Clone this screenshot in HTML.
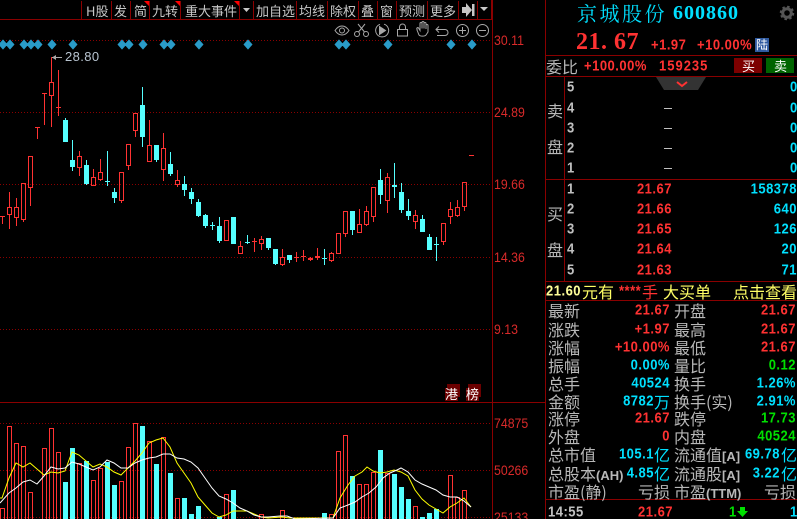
<!DOCTYPE html>
<html><head><meta charset="utf-8"><style>
html,body{margin:0;padding:0;background:#000}
#p{position:relative;width:797px;height:519px;overflow:hidden;background:#000;font-family:"Liberation Sans","WenQuanYi Zen Hei",sans-serif}
#p svg{position:absolute;left:0;top:0}
.t{position:absolute;white-space:nowrap;line-height:16px;height:16px}
.z{font-family:"WenQuanYi Zen Hei","Noto Sans CJK SC",sans-serif;font-size:16px;color:#b8b8b8}
.b{font-weight:bold;font-size:13px;letter-spacing:.5px;transform:scaleY(1.15)}
.tb{font-family:"WenQuanYi Zen Hei","Noto Sans CJK SC",sans-serif;font-size:13px;color:#c8c8c8;top:3px}
.a{font-size:14px;color:#d92a2a;transform:scaleX(.88);transform-origin:left center}
.r{color:#ff3232}.c{color:#00e0ff}.g{color:#00e000}.y{color:#ffff66}.w{color:#c0c0c0}
</style></head><body><div id="p">
<svg width="797" height="519" viewBox="0 0 797 519">
<g stroke="#8a0000" stroke-width="1" stroke-dasharray="1 2" fill="none">
<path d="M0 40.5H492M0 112.5H492M0 184.5H492M0 257.5H492M0 329.5H492M0 423.5H492M0 470.5H492M0 517.5H492"/>
</g>
<g stroke="#8a0000" stroke-width="1" fill="none">
<path d="M0 19.5H492M492.5 0V519M545.5 0V519M0 402.5H545M546 55.5H797M546 76.5H797M546 179.5H797M546 281.5H797M546 300.5H797M546 499.5H797M564.5 76V281"/>
<path d="M81.5 1V19M111.5 1V19M130.5 1V19M149.5 1V19M180.5 1V19M239.5 1V19M253.5 1V19M296.5 1V19M327.5 1V19M358.5 1V19M377.5 1V19M396.5 1V19M427.5 1V19M458.5 1V19M477.5 1V19M491.5 0V19"/>
</g>
<path d="M144 1h5v5zM175 1h5v5zM234 1h5v5z" fill="#f00"/>
<path d="M243 8h7l-3.500 4zM480 7h8l-4 4z" fill="#c8c8c8"/>
<path d="M462 7h4V3l6 7-6 7v-4h-4zM472 4h2.500v12h-2.500z" fill="#c8c8c8"/>
<g fill="#2a9bc8" stroke="#2a9bc8" stroke-width=".8"><path d="M3 40l4 4.500-4 4.500-4-4.500zM10 40l4 4.500-4 4.500-4-4.500zM24 40l4 4.500-4 4.500-4-4.500zM31 40l4 4.500-4 4.500-4-4.500zM38 40l4 4.500-4 4.500-4-4.500zM52 40l4 4.500-4 4.500-4-4.500zM73 40l4 4.500-4 4.500-4-4.500zM122 40l4 4.500-4 4.500-4-4.500zM129 40l4 4.500-4 4.500-4-4.500zM143 40l4 4.500-4 4.500-4-4.500zM164 40l4 4.500-4 4.500-4-4.500zM171 40l4 4.500-4 4.500-4-4.500zM199 40l4 4.500-4 4.500-4-4.500zM248 40l4 4.500-4 4.500-4-4.500zM339 40l4 4.500-4 4.500-4-4.500zM346 40l4 4.500-4 4.500-4-4.500zM388 40l4 4.500-4 4.500-4-4.500zM451 40l4 4.500-4 4.500-4-4.500zM472 40l4 4.500-4 4.500-4-4.500z"/></g>
<g stroke="#a8a8a8" stroke-width="1" fill="none">
<path d="M335 30.500c4-6 10-6 14 0c-4 6-10 6-14 0z"/><circle cx="342" cy="30.500" r="2.500"/>
<circle cx="357" cy="34" r="2.500"/><circle cx="366" cy="34" r="2.500"/><path d="M358.500 32L365 24M364.500 32L358 24"/>
<path d="M384 24.200A6.500 6.500 0 1 1 380 24.300"/><path d="M379.500 26.500l6 4-6 4z" fill="#a8a8a8"/>
<path d="M397.500 29.500h10v6.500h-10zM399.500 29.500v-2.500a3 3 0 0 1 6 0v2.500"/>
<path d="M417 30l2 5c1 1.500 6 1.500 7 0l2-3v-6.500a.800.800 0 0 0-2 0v3.500v-5.500a.800.800 0 0 0-2 0v5v-6a.800.800 0 0 0-2 0v6v-5a.800.800 0 0 0-2 0v7l-1.500-2.500a.800.800 0 0 0-1.500 1z"/>
<path d="M436 29.500h9a3 3 0 0 1 0 6h-8M439 26.500l-3 3 3 3"/>
<circle cx="462.500" cy="30.500" r="6"/><path d="M459 30.500h7M462.500 27v7"/>
<circle cx="482.500" cy="30.500" r="6"/><path d="M479 30.500h7"/>
</g>
<path d="M52 57.500H62" stroke="#aaa"/><path d="M52 57.500l4-2.500v5z" fill="#aaa"/>
<!-- volume -->
<path d="M63 482h5v37h-5zM70 448h5v71h-5zM84 461h5v58h-5zM105 462h5v57h-5zM112 485h5v34h-5zM140 426h5v93h-5zM154 464h5v55h-5zM168 473h5v46h-5zM182 498h5v21h-5zM189 514h5v5h-5zM196 506h5v13h-5zM217 517h5v2h-5zM231 490h5v29h-5zM322 513h5v6h-5zM350 476h5v43h-5zM378 450h5v69h-5zM392 474h5v45h-5zM399 487h5v32h-5zM406 499h5v20h-5zM420 517h5v2h-5zM427 513h5v6h-5zM434 509h5v10h-5z" fill="#55ffff"/>
<path d="M0.500 508.500h4V520h-4zM7.500 426.500h4V520h-4zM14.500 443.500h4V520h-4zM21.500 446.500h4V520h-4zM28.500 492.500h4V520h-4zM42.500 448.500h4V520h-4zM49.500 428.500h4V520h-4zM56.500 452.500h4V520h-4zM77.500 463.500h4V520h-4zM91.500 480.500h4V520h-4zM98.500 468.500h4V520h-4zM119.500 481.500h4V520h-4zM126.500 447.500h4V520h-4zM133.500 423.500h4V520h-4zM147.500 441.500h4V520h-4zM161.500 437.500h4V520h-4zM175.500 498.500h4V520h-4zM224.500 494.500h4V520h-4zM259.500 514.500h4V520h-4zM280.500 510.500h4V520h-4zM329.500 514.500h4V520h-4zM336.500 451.500h4V520h-4zM343.500 435.500h4V520h-4zM357.500 484.500h4V520h-4zM364.500 484.500h4V520h-4zM371.500 472.500h4V520h-4zM385.500 473.500h4V520h-4zM413.500 506.500h4V520h-4zM448.500 475.500h4V520h-4zM455.500 497.500h4V520h-4zM462.500 490.500h4V520h-4z" fill="none" stroke="#ff3232"/>
<polyline fill="none" stroke="#ffff00" stroke-width="1" points="0,498 2,498 9,478 16,463 23,467 30,463 37,469 44,475 51,472 58,473 65,471 72,452 79,455 86,461 93,467 100,464 107,467 114,472 121,475 128,468 135,461 142,453 149,443 156,440 163,438 170,447 177,463 184,473 191,483 198,497 205,505 212,513 219,517 226,515 233,511 240,511 247,511 254,514 261,517 268,518 282,517 290,518 325,518 333,518 340,498 348,485 355,476 362,472 367,467 373,471 380,473 387,472 394,470 401,472 408,476 415,490 422,499 429,505 436,509 443,513 450,507 457,503 464,498 471,507"/>
<polyline fill="none" stroke="#ffffff" stroke-width="1" points="0,503 9,493 16,488 23,482 30,480 37,484 44,476 51,467 58,469 65,468 72,462 79,464 86,467 93,470 100,467 107,460 114,463 121,468 128,468 135,463 142,460 149,458 156,457 163,454 170,454 177,458 184,459 191,462 198,468 205,478 212,488 219,496 226,499 233,503 240,508 247,511 254,515 261,517 268,517 280,516 287,516 295,519 333,518 340,508 348,505 355,502 362,497 369,493 376,487 383,478 390,473 397,470 401,468 408,472 415,480 422,484 429,487 436,490 443,495 450,497 457,497 464,501 471,507"/>
<!-- candles -->
<path d="M63 120h5v22h-5zM70 160h5v7h-5zM84 165h5v19h-5zM112 192h5v6h-5zM140 105h5v32h-5zM154 145h5v15h-5zM168 164h5v10h-5zM182 184h5v6h-5zM189 192h5v7h-5zM196 202h5v14h-5zM203 215h5v11h-5zM217 226h5v15h-5zM231 217h5v27h-5zM266 238h5v10h-5zM273 249h5v15h-5zM287 255h5v5h-5zM350 211h5v19h-5zM378 180h5v15h-5zM399 192h5v18h-5zM406 211h5v5h-5zM420 219h5v13h-5zM427 237h5v13h-5zM392 185h5v2h-5z" fill="#55ffff"/>
<path fill="none" stroke="#55ffff" d="M65.500 118V120M72.500 140V171M86.500 160V185M107.500 151V186M105 181.500h5M114.500 188V203M142.500 87V147M156.500 160V162M170.500 152V176M184.500 176V196M191.500 188V204M198.500 199V217M205.500 214V228M212.500 222V230M210 225.500h5M219.500 217V243M247.500 235V244M245 242.500h5M268.500 248V250M275.500 264V265M289.500 260V263M324.500 249V265M322 258.500h5M352.500 230V235M380.500 169V204M394.500 163V198M401.500 183V213M408.500 199V220M422.500 215V219M429.500 234V237M436.500 237V261M434 244.500h5"/>
<path fill="none" stroke="#ff3232" d="M2.500 216V224M0 216.500h5M9.500 192V207M7.500 207.500h4V214.500h-4zM9.500 215V229M16.500 198V207M14.500 207.500h4V217.500h-4zM16.500 218V226M21.500 183.500h4V219.500h-4zM23.500 220V222M28.500 156.500h4V187.500h-4zM30.500 188V206M37.500 127V139M35 127.500h5M44.500 93V125M42 93.500h5M51.500 57V82M49.500 82.500h4V95.500h-4zM51.500 96V127M58.500 70V116M56 107.500h5M79.500 151V156M77.500 156.500h4V167.500h-4zM79.500 168V176M93.500 169V177M91.500 177.500h4V185.500h-4zM100.500 159V172M98.500 172.500h4V179.500h-4zM100.500 180V181M119.500 172.500h4V200.500h-4zM121.500 201V203M126.500 144.500h4V165.500h-4zM128.500 166V170M133.500 113.500h4V130.500h-4zM135.500 131V137M149.500 120V145M147.500 145.500h4V161.500h-4zM163.500 133V148M161.500 148.500h4V169.500h-4zM163.500 170V181M177.500 170V180M175.500 180.500h4V184.500h-4zM177.500 185V187M224.500 220.500h4V240.500h-4zM240.500 241V246M238.500 246.500h4V253.500h-4zM254.500 238V252M252 241.500h5M261.500 236V239M259.500 239.500h4V243.500h-4zM261.500 244V250M282.500 249V257M280.500 257.500h4V264.500h-4zM282.500 265V266M296.500 252V262M294 257.500h5M303.500 250V261M301 256.500h5M310.500 257V261M308 258.500h5M308 259.500h5M317.500 248V260M315 256.500h5M315 257.500h5M331.500 252V253M329.500 253.500h4V260.500h-4zM331.500 261V262M336.500 233.500h4V253.500h-4zM343.500 211.500h4V233.500h-4zM345.500 234V237M359.500 209V224M357.500 224.500h4V232.500h-4zM366.500 206V211M364.500 211.500h4V224.500h-4zM366.500 225V226M371.500 187.500h4V216.500h-4zM373.500 217V222M387.500 173V177M385.500 177.500h4V200.500h-4zM387.500 201V213M415.500 210V215M413.500 215.500h4V221.500h-4zM415.500 222V229M441.500 223.500h4V241.500h-4zM443.500 242V245M450.500 202V209M448.500 209.500h4V216.500h-4zM450.500 217V224M457.500 200V207M455.500 207.500h4V215.500h-4zM457.500 216V217M462.500 182.500h4V206.500h-4zM464.500 207V211M469 155.500h5"/>
<!-- 港榜 -->
<path d="M447 384h13v13h-13zM468 384h13v13h-13z" fill="#6b0000"/>
<path d="M445 388h13v13h-13zM466 388h13v13h-13z" fill="#6b0000"/>
<!-- right widgets -->
<path d="M656 77h50l-8 13h-34z" fill="#333"/>
<path d="M677 82l5 4 5-4" fill="none" stroke="#ff3232" stroke-width="2"/>
<path d="M755 38h14v14h-14z" fill="#2f5aa0"/>
<path d="M734 58h28v15h-28z" fill="#7d0000"/>
<path d="M766 58h28v15h-28z" fill="#006400"/>
<g fill="none" stroke="#555"><circle cx="787" cy="13" r="4.300" stroke-width="3"/><circle cx="787" cy="13" r="6" stroke-width="2.500" stroke-dasharray="2.400 2.300"/></g>
<path d="M664 108.500h8M664 128.500h8M664 148.500h8M664 168.500h8" stroke="#c0c0c0"/>
<path d="M740 507h5v4h3l-5.500 6-5.500-6h3z" fill="#00e000"/>
</svg>

<span class="t tb" style="left:86px">H股</span><span class="t tb" style="left:114px">发</span><span class="t tb" style="left:134px">简</span><span class="t tb" style="left:152px">九转</span><span class="t tb" style="left:185px">重大事件</span><span class="t tb" style="left:256px">加自选</span><span class="t tb" style="left:299px">均线</span><span class="t tb" style="left:330px">除权</span><span class="t tb" style="left:361px">叠</span><span class="t tb" style="left:380px">窗</span><span class="t tb" style="left:399px">预测</span><span class="t tb" style="left:430px">更多</span>

<span class="t" style="left:65px;top:49px;font-size:13px;color:#b8c4d0;letter-spacing:.4px">28.80</span>
<span class="t a" style="left:494px;top:32px">30.11</span>
<span class="t a" style="left:494px;top:104px">24.89</span>
<span class="t a" style="left:494px;top:176px">19.66</span>
<span class="t a" style="left:494px;top:249px">14.36</span>
<span class="t a" style="left:494px;top:321px">9.13</span>
<span class="t a" style="left:494px;top:415px">74875</span>
<span class="t a" style="left:494px;top:462px">50266</span>
<span class="t a" style="left:494px;top:509px">25133</span>
<span class="t z" style="left:445px;top:386px;font-size:13px;color:#fff">港</span>
<span class="t z" style="left:466px;top:386px;font-size:13px;color:#fff">榜</span>

<span class="t" style="left:577px;top:3px;font-family:'Noto Serif CJK SC',serif;font-size:20px;line-height:20px;height:20px;color:#00e0ff;letter-spacing:2.500px">京城股份</span>
<span class="t" style="left:673px;top:3px;font-family:'Liberation Serif',serif;font-weight:bold;font-size:20px;line-height:20px;height:20px;color:#00e0ff;letter-spacing:1px">600860</span>
<span class="t r" style="left:576px;top:30px;font-family:'Liberation Serif',serif;font-weight:bold;font-size:24px;line-height:24px;height:24px;letter-spacing:.5px">21. 67</span>
<span class="t b r" style="left:651px;top:37px">+1.97</span>
<span class="t b r" style="left:697px;top:37px">+10.00%</span>
<span class="t z" style="left:756px;top:37px;font-size:12px;color:#fff">陆</span>

<span class="t z" style="left:546px;top:58px">委比</span>
<span class="t b r" style="left:584px;top:58px;font-size:13px">+100.00%</span>
<span class="t b r" style="left:659px;top:58px;letter-spacing:1px">159235</span>
<span class="t z" style="left:742px;top:58px;font-size:13px;color:#fff">买</span>
<span class="t z" style="left:774px;top:58px;font-size:13px;color:#fff">卖</span>

<span class="t z" style="left:547px;top:102px">卖</span><span class="t z" style="left:547px;top:138px">盘</span>
<span class="t z" style="left:547px;top:205px">买</span><span class="t z" style="left:547px;top:241px">盘</span>

<span class="t b w" style="left:567px;top:79px">5</span><span class="t b w" style="left:567px;top:100px">4</span><span class="t b w" style="left:567px;top:120px">3</span><span class="t b w" style="left:567px;top:140px">2</span><span class="t b w" style="left:567px;top:160px">1</span>
<span class="t b c" style="left:790px;top:79px">0</span><span class="t b c" style="left:790px;top:100px">0</span><span class="t b c" style="left:790px;top:120px">0</span><span class="t b c" style="left:790px;top:140px">0</span><span class="t b c" style="left:790px;top:160px">0</span>

<span class="t b w" style="left:567px;top:181px">1</span><span class="t b w" style="left:567px;top:201px">2</span><span class="t b w" style="left:567px;top:221px">3</span><span class="t b w" style="left:567px;top:241px">4</span><span class="t b w" style="left:567px;top:262px">5</span>
<span class="t b r" style="right:125px;top:181px">21.67</span><span class="t b r" style="right:125px;top:201px">21.66</span><span class="t b r" style="right:125px;top:221px">21.65</span><span class="t b r" style="right:125px;top:241px">21.64</span><span class="t b r" style="right:125px;top:262px">21.63</span>
<span class="t b c" style="right:0;top:181px">158378</span><span class="t b c" style="right:0;top:201px">640</span><span class="t b c" style="right:0;top:221px">126</span><span class="t b c" style="right:0;top:241px">20</span><span class="t b c" style="right:0;top:262px">71</span>

<span class="t b" style="left:546px;top:283px;color:#ffff99">21.60</span><span class="t z y" style="left:582px;top:283px">元有</span>
<span class="t b r" style="left:619px;top:283px">****</span><span class="t z r" style="left:642px;top:283px">手</span>
<span class="t z y" style="left:663px;top:283px">大买单</span><span class="t z y" style="left:733px;top:283px">点击查看</span>

<span class="t z" style="left:548px;top:302px">最新</span><span class="t b r" style="right:127px;top:302px">21.67</span><span class="t z" style="left:674px;top:302px">开盘</span><span class="t b r" style="right:1px;top:302px">21.67</span>
<span class="t z" style="left:548px;top:321px">涨跌</span><span class="t b r" style="right:127px;top:321px">+1.97</span><span class="t z" style="left:674px;top:321px">最高</span><span class="t b r" style="right:1px;top:321px">21.67</span>
<span class="t z" style="left:548px;top:339px">涨幅</span><span class="t b r" style="right:127px;top:339px">+10.00%</span><span class="t z" style="left:674px;top:339px">最低</span><span class="t b r" style="right:1px;top:339px">21.67</span>
<span class="t z" style="left:548px;top:357px">振幅</span><span class="t b c" style="right:127px;top:357px">0.00%</span><span class="t z" style="left:674px;top:357px">量比</span><span class="t b g" style="right:1px;top:357px">0.12</span>
<span class="t z" style="left:548px;top:375px">总手</span><span class="t b c" style="right:127px;top:375px">40524</span><span class="t z" style="left:674px;top:375px">换手</span><span class="t b c" style="right:1px;top:375px">1.26%</span>
<span class="t z" style="left:548px;top:393px">金额</span><span class="t b c" style="right:143px;top:393px">8782</span><span class="t z c" style="left:654px;top:393px">万</span><span class="t z" style="left:674px;top:393px">换手(实)</span><span class="t b c" style="right:1px;top:393px">2.91%</span>
<span class="t z" style="left:548px;top:410px">涨停</span><span class="t b r" style="right:127px;top:410px">21.67</span><span class="t z" style="left:674px;top:410px">跌停</span><span class="t b g" style="right:1px;top:410px">17.73</span>
<span class="t z" style="left:548px;top:428px">外盘</span><span class="t b r" style="right:127px;top:428px">0</span><span class="t z" style="left:674px;top:428px">内盘</span><span class="t b g" style="right:1px;top:428px">40524</span>
<span class="t z" style="left:548px;top:446px">总市值</span><span class="t b c" style="right:143px;top:446px">105.1</span><span class="t z c" style="left:654px;top:446px">亿</span><span class="t z" style="left:674px;top:446px">流通值<b style="font-size:13px;font-family:'Liberation Sans'">[A]</b></span><span class="t b c" style="right:17px;top:446px">69.78</span><span class="t z c" style="left:781px;top:446px">亿</span>
<span class="t z" style="left:548px;top:465px">总股本<b style="font-size:13px;font-family:'Liberation Sans'">(AH)</b></span><span class="t b c" style="right:143px;top:465px">4.85</span><span class="t z c" style="left:654px;top:465px">亿</span><span class="t z" style="left:674px;top:465px">流通股<b style="font-size:13px;font-family:'Liberation Sans'">[A]</b></span><span class="t b c" style="right:17px;top:465px">3.22</span><span class="t z c" style="left:781px;top:465px">亿</span>
<span class="t z" style="left:548px;top:483px">市盈(静)</span><span class="t z" style="right:127px;top:483px">亏损</span><span class="t z" style="left:674px;top:483px">市盈<b style="font-size:13px;font-family:'Liberation Sans'">(TTM)</b></span><span class="t z" style="right:1px;top:483px">亏损</span>

<span class="t b w" style="left:548px;top:504px">14:55</span>
<span class="t b r" style="left:638px;top:504px">21.67</span>
<span class="t b g" style="left:729px;top:504px">1</span>
<span class="t b c" style="left:790px;top:504px">1</span>
</div></body></html>
